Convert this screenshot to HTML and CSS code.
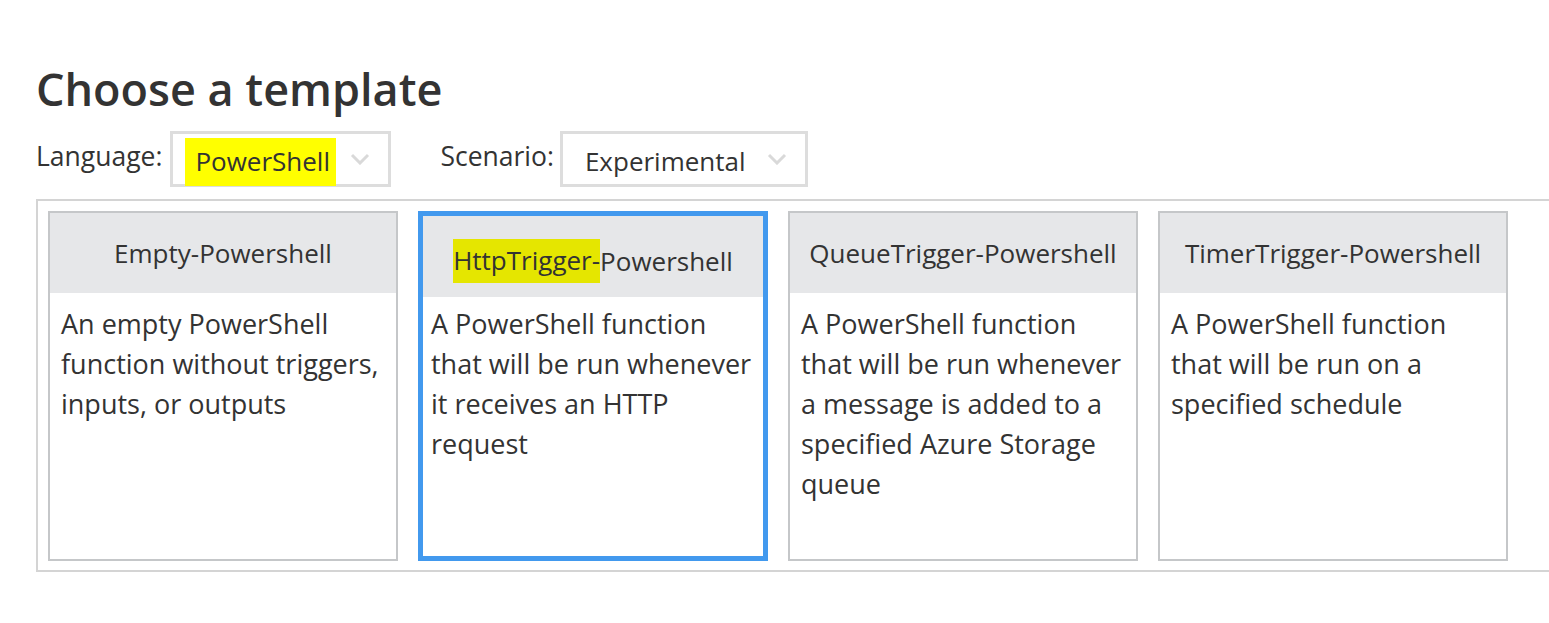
FILE: index.html
```html
<!DOCTYPE html>
<html lang="en">
<head>
<meta charset="utf-8">
<title>Choose a template</title>
<link rel="stylesheet" href="styles.css">
</head>
<body>
<main class="page">
  <h1 class="title">Choose a template</h1>
  <div class="filters">
    <label class="filter-label">Language:</label>
    <div class="select select-lang">
      <span class="select-value"><mark class="hl">PowerShell</mark></span>
      <svg class="chevron" viewBox="0 0 20 12" width="20" height="12"><path d="M2 2 L10 10 L18 2" fill="none" stroke="#d9d9d9" stroke-width="3"/></svg>
    </div>
    <label class="filter-label filter-label-2">Scenario:</label>
    <div class="select select-scen">
      <span class="select-value">Experimental</span>
      <svg class="chevron" viewBox="0 0 20 12" width="20" height="12"><path d="M2 2 L10 10 L18 2" fill="none" stroke="#d9d9d9" stroke-width="3"/></svg>
    </div>
  </div>
  <section class="templates">
    <div class="card">
      <div class="card-head">Empty-Powershell</div>
      <div class="card-body">An empty PowerShell function without triggers, inputs, or outputs</div>
    </div>
    <div class="card card-selected">
      <div class="card-head"><mark class="hl hl-dim">HttpTrigger-</mark>Powershell</div>
      <div class="card-body">A PowerShell function that will be run whenever it receives an HTTP request</div>
    </div>
    <div class="card">
      <div class="card-head">QueueTrigger-Powershell</div>
      <div class="card-body">A PowerShell function that will be run whenever a message is added to a specified Azure Storage queue</div>
    </div>
    <div class="card">
      <div class="card-head">TimerTrigger-Powershell</div>
      <div class="card-body">A PowerShell function that will be run on a specified schedule</div>
    </div>
  </section>
</main>
</body>
</html>
```
FILE: styles.css
```css
html, body {
  margin: 0;
  padding: 0;
  background: #ffffff;
}
body {
  font-family: "Open Sans", "Noto Sans", "Liberation Sans", sans-serif;
  color: #333333;
}
.page {
  padding: 0 0 0 36px;
}
.title {
  margin: 0;
  padding-top: 60px;
  font-size: 45px;
  font-weight: 600;
  line-height: 58px;
  color: #333333;
}
.filters {
  display: flex;
  align-items: center;
  height: 56px;
  margin-top: 13px;
}
.filter-label {
  font-size: 26.5px;
  color: #333;
  padding-bottom: 6px;
  margin-right: 8px;
}
.filter-label-2 {
  margin-left: 49px;
  margin-right: 6px;
}
.select {
  box-sizing: border-box;
  height: 56px;
  border: 3px solid #dddddd;
  display: flex;
  align-items: center;
  padding: 0 18px 0 12px;
  font-size: 26px;
  color: #333;
}
.select-lang {
  width: 221px;
}
.select-scen {
  width: 248px;
  padding-left: 22px;
}
.select-value {
  flex: 1;
  padding-top: 3px;
}
.hl {
  background: #ffff00;
  color: #333;
  padding: 5px 6px 7px 10px;
}
.hl-dim {
  background: #e5e600;
  padding: 3px 0 5px 0;
}
.chevron {
  flex: none;
  margin-top: 0;
}
.templates {
  margin-top: 12px;
  border: 2px solid #d4d4d4;
  border-right: none;
  padding: 10px 10px 9px 10px;
  display: flex;
  gap: 20px;
}
.card {
  box-sizing: border-box;
  width: 350px;
  height: 350px;
  border: 2px solid #c5c7c9;
  background: #fff;
}
.card-head {
  height: 80px;
  background: #e6e7e9;
  display: flex;
  align-items: center;
  justify-content: center;
  font-size: 26px;
  color: #333;
}
.card-body {
  padding: 11px 8px 0 11px;
  font-size: 27px;
  line-height: 40px;
  color: #333;
}
.card-selected {
  border: 5px solid #4299ee;
}
.card-selected .card-head {
  height: 81px;
  padding-top: 8px;
  box-sizing: border-box;
}
.card-selected .card-body {
  padding: 7px 5px 0 8px;
}
```
